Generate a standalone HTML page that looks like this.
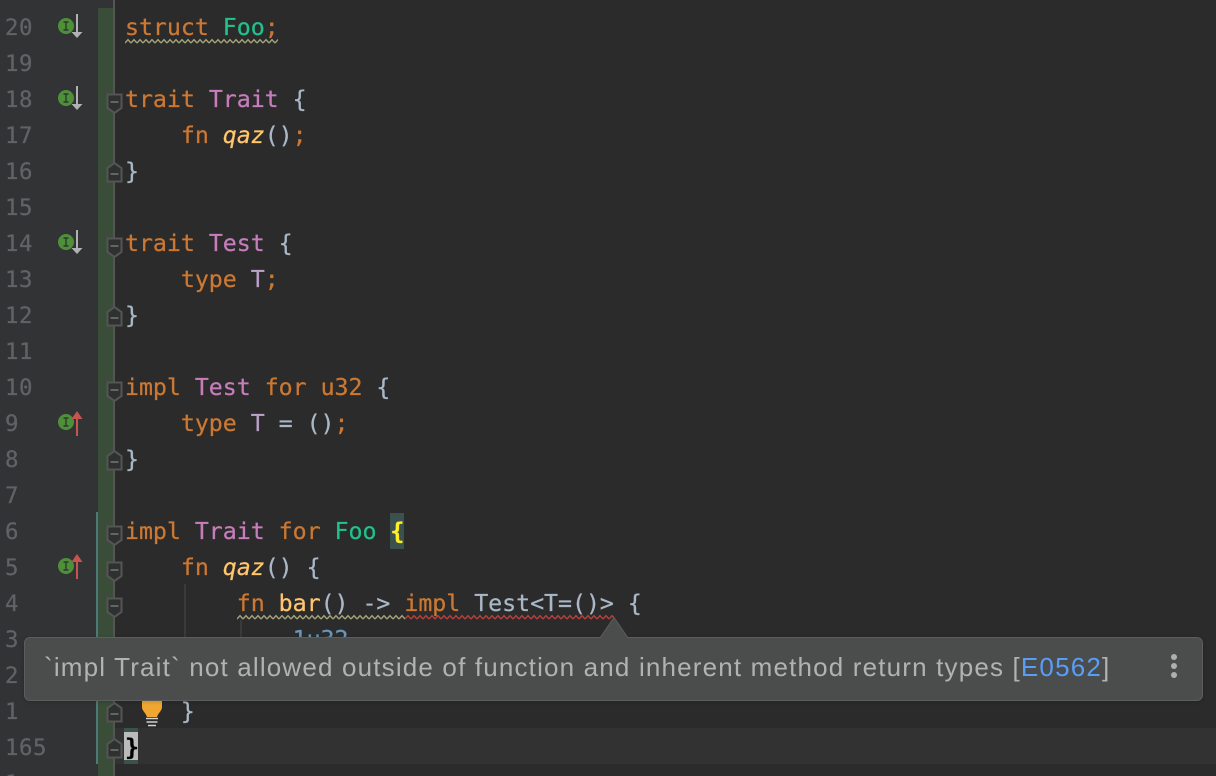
<!DOCTYPE html>
<html><head><meta charset="utf-8">
<style>
html,body{margin:0;padding:0;background:#2b2b2b;}
#r{position:relative;width:1216px;height:776px;overflow:hidden;background:#2b2b2b;font-family:"DejaVu Sans Mono","Liberation Mono",monospace;}
.a{position:absolute;}
.l{position:absolute;left:125px;height:36px;line-height:38px;font-size:23.25px;letter-spacing:-.03px;white-space:pre;color:#a9b7c6;-webkit-text-stroke:.25px currentColor;}
.n{position:absolute;left:5px;height:36px;line-height:38px;font-size:22.4px;letter-spacing:.5px;color:#606366;white-space:pre;-webkit-text-stroke:.25px currentColor;}
.k{color:#cc7832}.s{color:#1fc28c}.t{color:#c77dbb}.f{color:#ffc66d;font-style:italic}.b{color:#ffc66d}.p{color:#b9a0c9}.d{color:#6897bb}
#tip{position:absolute;left:24px;top:637px;width:1177px;height:62px;background:#4b4d4d;border:1px solid #5c5e5e;border-radius:6px;box-shadow:0 1px 4px rgba(0,0,0,.18);}
#tt{position:absolute;left:44px;top:637px;height:62px;line-height:60px;font-family:"Liberation Sans",sans-serif;font-size:26px;letter-spacing:1.17px;color:#b1b3b3;white-space:pre;}
</style></head><body>
<div id="r">
<div class="a" style="left:0;top:0;width:113px;height:776px;background:#313335"></div>
<div class="a" style="left:115px;top:728px;width:1101px;height:36px;background:#323232"></div>
<div class="a" style="left:98px;top:8px;width:15px;height:768px;background:#3a4d38"></div>
<div class="a" style="left:113px;top:0;width:2px;height:776px;background:#555"></div>
<div class="a" style="left:96px;top:512px;width:2px;height:252px;background:#4b7a78"></div>
<div class="a" style="left:184px;top:584px;width:2px;height:54px;background:#3a3a3a"></div>
<div class="a" style="left:240px;top:620px;width:2px;height:18px;background:#3a3a3a"></div>
<div class="a" style="left:390px;top:513px;width:14px;height:36px;background:#3b514d"></div>
<div class="a" style="left:124px;top:728px;width:14px;height:36px;background:#3b514d"></div>
<div class="a" style="left:124px;top:732px;width:14px;height:28px;background:#bbbbbb"></div>

<div class="n" style="top:9px">20</div>
<div class="n" style="top:45px">19</div>
<div class="n" style="top:81px">18</div>
<div class="n" style="top:117px">17</div>
<div class="n" style="top:153px">16</div>
<div class="n" style="top:189px">15</div>
<div class="n" style="top:225px">14</div>
<div class="n" style="top:261px">13</div>
<div class="n" style="top:297px">12</div>
<div class="n" style="top:333px">11</div>
<div class="n" style="top:369px">10</div>
<div class="n" style="top:405px">9</div>
<div class="n" style="top:441px">8</div>
<div class="n" style="top:477px">7</div>
<div class="n" style="top:513px">6</div>
<div class="n" style="top:549px">5</div>
<div class="n" style="top:585px">4</div>
<div class="n" style="top:621px">3</div>
<div class="n" style="top:657px">2</div>
<div class="n" style="top:693px">1</div>
<div class="n" style="top:729px">165</div>
<div class="n" style="top:765px">1</div>

<div class="l" style="top:9px"><span class="k">struct</span> <span class="s">Foo</span><span class="k">;</span></div>
<div class="l" style="top:81px"><span class="k">trait</span> <span class="t">Trait</span> {</div>
<div class="l" style="top:117px">    <span class="k">fn</span> <span class="f">qaz</span>()<span class="k">;</span></div>
<div class="l" style="top:153px">}</div>
<div class="l" style="top:225px"><span class="k">trait</span> <span class="t">Test</span> {</div>
<div class="l" style="top:261px">    <span class="k">type</span> <span class="p">T</span><span class="k">;</span></div>
<div class="l" style="top:297px">}</div>
<div class="l" style="top:369px"><span class="k">impl</span> <span class="t">Test</span> <span class="k">for</span> <span class="k">u32</span> {</div>
<div class="l" style="top:405px">    <span class="k">type</span> <span class="p">T</span> = ()<span class="k">;</span></div>
<div class="l" style="top:441px">}</div>
<div class="l" style="top:513px"><span class="k">impl</span> <span class="t">Trait</span> <span class="k">for</span> <span class="s">Foo</span> <span style="color:#ffef28;font-weight:bold">{</span></div>
<div class="l" style="top:549px">    <span class="k">fn</span> <span class="f">qaz</span>() {</div>
<div class="l" style="top:585px">        <span class="k">fn</span> <span class="b">bar</span>() -&gt; <span class="k">impl</span> Test&lt;T=()&gt; {</div>
<div class="l" style="top:621px">            <span class="d">1u32</span></div>
<div class="l" style="top:693px">    }</div>
<div class="l" style="top:729px;color:#000;font-weight:bold">}</div>

<svg class="a" style="left:0;top:0" width="1216" height="776" viewBox="0 0 1216 776" fill="none">
<defs>
<pattern id="zy" width="6" height="6" patternUnits="userSpaceOnUse" patternTransform="translate(125 38.500)"><path d="M0 4.500L3 1.200L6 4.500" stroke="#a5a47a" stroke-width="1.400" fill="none"/></pattern>
<pattern id="zy2" width="6" height="6" patternUnits="userSpaceOnUse" patternTransform="translate(237 614.500)"><path d="M0 4.500L3 1.200L6 4.500" stroke="#a5a47a" stroke-width="1.400" fill="none"/></pattern>
<pattern id="zr" width="6" height="6" patternUnits="userSpaceOnUse" patternTransform="translate(405 614.500)"><path d="M0 4.500L3 1.200L6 4.500" stroke="#b9403c" stroke-width="1.400" fill="none"/></pattern>
<g id="ci"><circle cx="66" cy="0" r="8" fill="#4f8f3a"/><path d="M63.500-4h5M63.500 4h5M66-4v8" stroke="#2b3a28" stroke-width="1.400"/></g>
<g id="dn"><path d="M77-13V7" stroke="#afb1b3" stroke-width="2"/><path d="M71.500 5h11l-5.500 6z" fill="#afb1b3"/></g>
<g id="up"><path d="M77-1V18" stroke="#c75450" stroke-width="2"/><path d="M71.500 1h11l-5.500-8z" fill="#c75450"/></g>
<g id="fo"><path d="M107.500-4.500H121.500V9L114.500 14L107.500 9Z" fill="#2f3030" stroke="#555" stroke-width="2"/><path d="M110.500 3h8" stroke="#777" stroke-width="1.500"/></g>
<g id="fc"><path d="M107.500 10.500H121.500V-3L114.500-8L107.500-3Z" fill="#2f3030" stroke="#555" stroke-width="2"/><path d="M110.500 3h8" stroke="#777" stroke-width="1.500"/></g>
</defs>
<rect x="125" y="38.500" width="153" height="6" fill="url(#zy)"/>
<rect x="237" y="614.500" width="168" height="6" fill="url(#zy2)"/>
<rect x="405" y="614.500" width="209" height="6" fill="url(#zr)"/>
<use href="#ci" y="26"/><use href="#dn" y="27"/>
<use href="#ci" y="98"/><use href="#dn" y="99"/>
<use href="#ci" y="242"/><use href="#dn" y="243"/>
<use href="#ci" y="422"/><use href="#up" y="418"/>
<use href="#ci" y="566"/><use href="#up" y="561"/>
<use href="#fo" y="99"/><use href="#fo" y="243"/><use href="#fo" y="387"/><use href="#fo" y="531"/><use href="#fo" y="567"/><use href="#fo" y="603"/>
<use href="#fc" y="171"/><use href="#fc" y="315"/><use href="#fc" y="459"/><use href="#fc" y="711"/><use href="#fc" y="747"/>
<path d="M142 700h20v7c0 4-4 6-5 10h-10c-1-4-5-6-5-10z" fill="#f0a732"/>
<path d="M146 718.500h12M146.500 722h11M148 725.500h8" stroke="#d0d0d0" stroke-width="1.600"/>
</svg>

<div id="tip"></div>
<svg class="a" style="left:596px;top:612px" width="36" height="30" viewBox="0 0 36 30"><path d="M4 27L18 5.500L32 27Z" fill="#4b4d4d"/><path d="M4 26L18 5.500L32 26" stroke="#5c5e5e" fill="none"/></svg>
<div id="tt">`impl Trait` not allowed outside of function and inherent method return types [<span style="color:#589df6">E0562</span>]</div>
<svg class="a" style="left:1164px;top:650px" width="20" height="32"><circle cx="10" cy="7" r="3" fill="#aeb0b0"/><circle cx="10" cy="16" r="3" fill="#aeb0b0"/><circle cx="10" cy="25" r="3" fill="#aeb0b0"/></svg>
</div>
</body></html>
